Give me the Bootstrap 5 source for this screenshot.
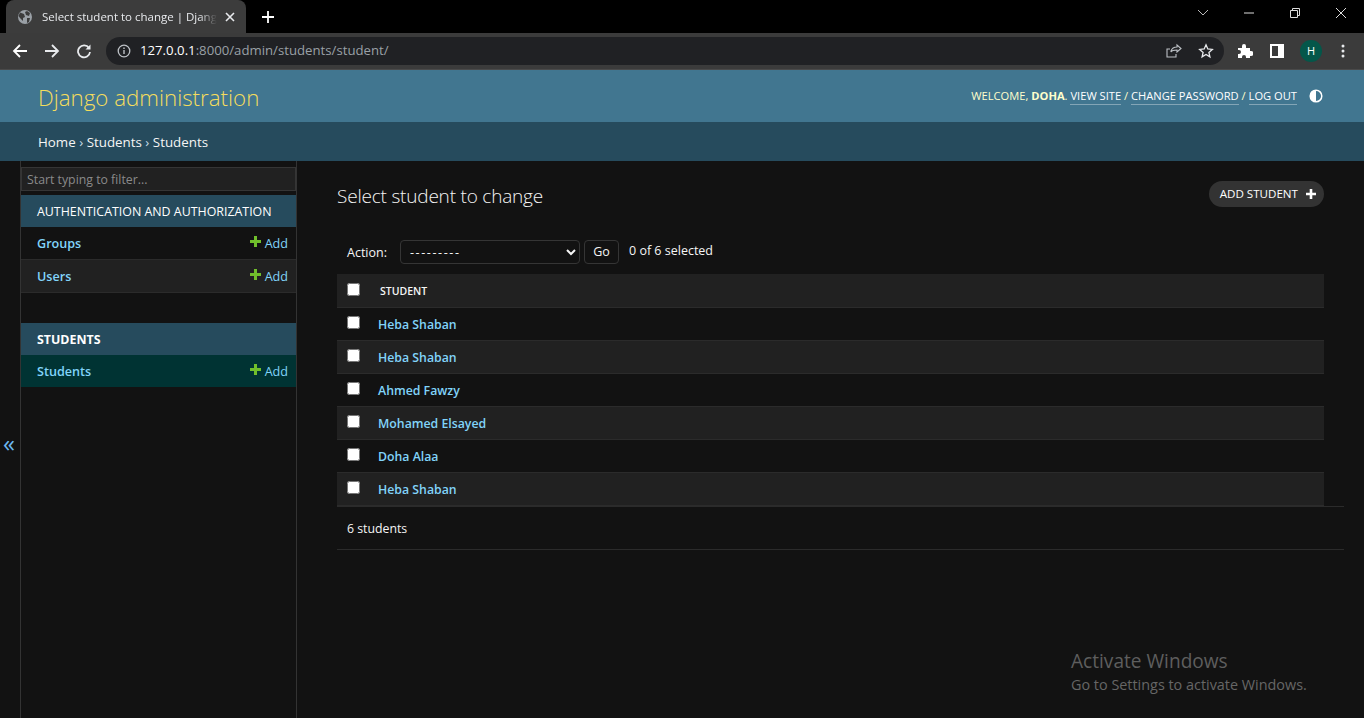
<!DOCTYPE html>
<html lang="en">
<head>
    <meta charset="UTF-8">
    <meta name="viewport" content="width=device-width, initial-scale=1">
    <title>Select student to change | Django site admin</title>
    <link href="https://cdn.jsdelivr.net/npm/bootstrap@5.3.0/dist/css/bootstrap.min.css" rel="stylesheet">
    <style>
        html, body { height: 718px; overflow: hidden; }
        body { background: #121212; color: #f5f5f5; font-family: "Open Sans", "Noto Sans", sans-serif; font-size: 13px; }
        a { text-decoration: none; }

        /* browser chrome */
        .tabbar { height: 33px; background: #000; }
        .tab { width: 240px; height: 33px; margin-left: 6px; padding-left: 11px; background: #3c3c3c; border-radius: 8px 8px 0 0; color: #e8eaed; font-size: 11.5px; white-space: nowrap; }
        .tab-title { width: 175px; overflow: hidden; margin-left: 9px; -webkit-mask-image: linear-gradient(to right, #000 90%, transparent); mask-image: linear-gradient(to right, #000 90%, transparent); }
        .win-btn { width: 46px; height: 26px; }
        .toolbar { height: 37px; background: #3b3b3b; border-bottom: 1px solid #4a4a4a; padding-left: 12px; }
        .nav-ico { margin-right: 16px; }
        .addr { width: 1118px; height: 28px; margin: 0 13px 0 -2px; background: #202124; border-radius: 14px; font-size: 13.2px; color: #9aa0a6; padding-right: 10px; }
        .addr b { color: #fff; font-weight: 400; }
        .addr-info { margin: 0 9px 0 11px; }
        .addr-share { margin-right: 16px; }
        .ext-panel { margin: 0 16px 0 17px; }
        .avatar { width: 22px; height: 22px; background: #04574a; color: #fff; font-size: 11px; margin-right: 19px; }

        /* django header */
        .dj-header { height: 52px; background: #417690; padding: 0 41px 0 38px; }
        .brand { color: #f5dd5d; font-size: 22.3px; font-weight: 300; padding-top: 4px; }
        .user-tools { font-size: 11.15px; color: #ffffcc; text-transform: uppercase; padding-top: 1px; }
        .user-tools a { color: #fff; border-bottom: 1px solid rgba(255,255,255,.35); padding-bottom: 1px; }
        .crumbs { height: 39px; background: #264b5d; padding: 2px 0 0 38px; color: #c4dce8; font-size: 13.35px; }
        .crumbs a, .crumbs span { color: #f5f5f5; }

        /* sidebar */
        .shell { height: 557px; }
        .toggle { width: 21px; border-right: 1px solid #333; color: #6cb8f0; font-size: 24px; padding-top: 270px; padding-left: 3px; line-height: 1; }
        .side { width: 276px; border-right: 1px solid #333; padding-top: 6px; }
        .filter { width: 275px; height: 24px; background: #212121; border: 1px solid #353535; color: #8a8a8a; font-size: 12.3px; padding: 2px 0 0 5px; margin-bottom: 4px; }
        .mod-cap { height: 32px; background: #264b5d; color: #fff; font-size: 12.4px; padding: 2px 0 0 16px; }
        .mod-cap-gap { margin-top: 30px; }
        .mod-row { height: 33px; border-bottom: 1px solid #2b2b2b; padding: 2px 8px 0 16px; font-size: 12.6px; }
        .mod-row.alt { background: #212121; }
        .mod-row.cur { background: #003333; height: 32px; border: 0; }
        .mod-row a { color: #81d4fa; }
        .mod-row .nm { font-weight: 600; }
        .add-link { gap: 4px; }
        .add-link svg { margin-top: -4px; }

        /* main */
        .main { width: 1047px; padding: 0 0 0 40px; }
        .main-h1 { font-size: 19px; letter-spacing: -.2px; font-weight: 300; margin: 4px 0 0; color: #f5f5f5; }
        .title-row { height: 79px; padding: 20px 20px 0 0; }
        .add-btn { height: 26px; background: #333; border-radius: 13px; padding: 0 8px 0 11px; font-size: 11.6px; color: #fff; }
        .actions-row { height: 34px; padding-left: 10px; font-size: 12.5px; width: 987px; }
        .act-select { width: 180px; height: 24px; background: #121212; color: #f5f5f5; border: 1px solid #353535; border-radius: 4px; font-size: 12.5px; letter-spacing: 1.6px; margin-left: 13px; padding: 0 0 0 5px; }
        .go { width: 35px; height: 24px; background: #121212; border: 1px solid #353535; border-radius: 4px; color: #f5f5f5; font-size: 12.5px; margin: 0 10px 0 4px; padding: 0; }
        .sel-count { margin-top: 2px; }
        .stu-table { width: 987px; margin: 0; font-size: 12.3px; }
        .stu-table td, .stu-table th { height: 33px; padding: 4px 0 0; border-bottom: 1px solid #2b2b2b; vertical-align: middle; background: transparent; }
        .stu-table tr.alt td, .stu-table th { background: #212121; }
        .stu-table .chk, .stu-table th.chk { width: 41px; padding: 0 0 0 10px; }
        .stu-table input { display: block; width: 13px; height: 13px; margin-top: -3px; }
        .stu-table th.chk input { margin-top: -2px; }
        .stu-table th.col { font-size: 10.5px; font-weight: 600; color: #f5f5f5; padding-left: 2px; }
        .stu-table a { color: #81d4fa; font-weight: 600; }
        .paginator { height: 44px; padding: 3px 0 0 10px; border-top: 1px solid #2b2b2b; border-bottom: 1px solid #2b2b2b; font-size: 12.3px; }

        /* watermark sits over the page */
        .watermark { position: absolute; left: 1071px; top: 649px; color: #666; font-size: 14.4px; line-height: 1.35; }
        .watermark div:first-child { font-size: 19.1px; color: #5e5e5e; }
    </style>
</head>
<body>

    <!-- Browser tab bar -->
    <div class="tabbar d-flex align-items-end justify-content-between">
        <div class="d-flex align-items-center">
            <div class="tab d-flex align-items-center">
                <svg width="16" height="16" viewBox="0 0 16 16" class="flex-shrink-0"><circle cx="8" cy="8" r="7" fill="#9aa0a6"/><path d="M3 3.500 7 5l1 3-2 1v3L3 9 1.500 7zM10 2l3 2-1 3-3-1-1-3zM10 9l3 0-1 4-2 1z" fill="#3c3c3c"/></svg>
                <div class="tab-title">Select student to change | Django</div>
                <svg width="10" height="10" viewBox="0 0 10 10" class="ms-2 flex-shrink-0"><path d="M1 1l8 8M9 1l-8 8" stroke="#e8eaed" stroke-width="1.600"/></svg>
            </div>
            <svg width="12" height="12" viewBox="0 0 12 12" class="ms-3"><path d="M6 0v12M0 6h12" stroke="#fff" stroke-width="1.800"/></svg>
        </div>
        <div class="d-flex align-self-start">
            <div class="win-btn d-flex align-items-center justify-content-center"><svg width="12" height="8" viewBox="0 0 12 8"><path d="M1 1l5 5 5-5" fill="none" stroke="#bbb"/></svg></div>
            <div class="win-btn d-flex align-items-center justify-content-center"><svg width="12" height="8" viewBox="0 0 12 8"><path d="M1 4h10" stroke="#ddd"/></svg></div>
            <div class="win-btn d-flex align-items-center justify-content-center"><svg width="12" height="12" viewBox="0 0 12 12"><path d="M1.500 3.500h7v7h-7zM3.500 3.500v-2h7v7h-2" fill="none" stroke="#ddd"/></svg></div>
            <div class="win-btn d-flex align-items-center justify-content-center"><svg width="12" height="12" viewBox="0 0 12 12"><path d="M1 1l10 10M11 1 1 11" stroke="#ddd"/></svg></div>
        </div>
    </div>

    <!-- Browser toolbar -->
    <div class="toolbar d-flex align-items-center">
        <svg width="16" height="16" viewBox="0 0 16 16" class="nav-ico"><path d="M15 8H2M8 2 2 8l6 6" fill="none" stroke="#fff" stroke-width="1.800"/></svg>
        <svg width="16" height="16" viewBox="0 0 16 16" class="nav-ico"><path d="M1 8h13M8 2l6 6-6 6" fill="none" stroke="#e8eaed" stroke-width="1.800"/></svg>
        <svg width="16" height="16" viewBox="0 0 16 16" class="nav-ico"><path d="M13 5A6 6 0 1 0 14 9" fill="none" stroke="#e8eaed" stroke-width="1.800"/><path d="M14.500 1.500v5h-5z" fill="#e8eaed"/></svg>
        <div class="addr d-flex align-items-center flex-shrink-0">
            <svg width="14" height="14" viewBox="0 0 14 14" class="addr-info"><circle cx="7" cy="7" r="5.800" fill="none" stroke="#bdc1c6" stroke-width="1.300"/><path d="M7 6v4M7 3.500v1.500" stroke="#bdc1c6" stroke-width="1.400"/></svg>
            <span><b>127.0.0.1</b>:8000/admin/students/student/</span>
            <svg width="16" height="16" viewBox="0 0 16 16" class="ms-auto addr-share"><path d="M5 8c1-3 4-4 6-4V2l4 3.500L11 9V7C9 7 6 7 5 9zM10 11v3H1V6h3" fill="none" stroke="#bdc1c6" stroke-width="1.100"/></svg>
            <svg width="16" height="16" viewBox="0 0 16 16"><path d="M8 1.800 9.800 6l4.500.4-3.400 3 1 4.400L8 11.500l-3.900 2.300 1-4.400-3.400-3L6.200 6z" fill="none" stroke="#e8eaed" stroke-width="1.300"/></svg>
        </div>
        <svg width="16" height="16" viewBox="0 0 16 16"><path d="M1 5h4V3a2 2 0 0 1 4 0v2h4v3h1a2.500 2.500 0 0 1 0 5h-1v2H9v-1a2 2 0 0 0-4 0v1H1v-4h1a2 2 0 0 0 0-4H1z" fill="#fff"/></svg>
        <svg width="14" height="14" viewBox="0 0 14 14" class="ext-panel"><path d="M0 0h14v14H0zM2 2v10h6V2z" fill="#fff" fill-rule="evenodd"/></svg>
        <div class="avatar rounded-circle d-flex align-items-center justify-content-center flex-shrink-0">H</div>
        <svg width="4" height="14" viewBox="0 0 4 14"><circle cx="2" cy="2" r="1.500" fill="#e8eaed"/><circle cx="2" cy="7" r="1.500" fill="#e8eaed"/><circle cx="2" cy="12" r="1.500" fill="#e8eaed"/></svg>
    </div>

    <!-- Django header -->
    <div class="dj-header d-flex align-items-center justify-content-between">
        <div class="brand">Django administration</div>
        <div class="user-tools d-flex align-items-center gap-2">
            <div>Welcome, <strong>Doha</strong>. <a href="#">View site</a> / <a href="#">Change password</a> / <a href="#">Log out</a></div>
            <svg width="14" height="14" viewBox="0 0 14 14" class="ms-1"><circle cx="7" cy="7" r="5.800" fill="none" stroke="#fff" stroke-width="1.500"/><path d="M7 1.200a5.800 5.800 0 0 0 0 11.600z" fill="#fff"/></svg>
        </div>
    </div>
    <div class="crumbs d-flex align-items-center">
        <div><a href="#">Home</a> › <a href="#">Students</a> › <span>Students</span></div>
    </div>

    <div class="shell d-flex">
        <div class="toggle">«</div>

        <!-- Sidebar -->
        <div class="side flex-shrink-0">
            <div class="filter d-flex align-items-center">Start typing to filter...</div>
            <div class="mod-cap d-flex align-items-center">AUTHENTICATION AND AUTHORIZATION</div>
            <div class="mod-row d-flex align-items-center justify-content-between"><a class="nm" href="#">Groups</a><a class="add-link d-flex align-items-center" href="#"><svg width="11" height="11" viewBox="0 0 11 11"><path d="M5.500 0v11M0 5.500h11" stroke="#70bf2b" stroke-width="3"/></svg>Add</a></div>
            <div class="mod-row alt d-flex align-items-center justify-content-between"><a class="nm" href="#">Users</a><a class="add-link d-flex align-items-center" href="#"><svg width="11" height="11" viewBox="0 0 11 11"><path d="M5.500 0v11M0 5.500h11" stroke="#70bf2b" stroke-width="3"/></svg>Add</a></div>
            <div class="mod-cap mod-cap-gap d-flex align-items-center fw-bold">STUDENTS</div>
            <div class="mod-row cur d-flex align-items-center justify-content-between"><a class="nm" href="#">Students</a><a class="add-link d-flex align-items-center" href="#"><svg width="11" height="11" viewBox="0 0 11 11"><path d="M5.500 0v11M0 5.500h11" stroke="#70bf2b" stroke-width="3"/></svg>Add</a></div>
        </div>

        <!-- Main content -->
        <div class="main">
            <div class="title-row d-flex justify-content-between align-items-start">
                <h1 class="main-h1">Select student to change</h1>
                <a class="add-btn d-flex align-items-center gap-2" href="#">ADD STUDENT
                    <svg width="10" height="10" viewBox="0 0 10 10"><path d="M5 0v10M0 5h10" stroke="#fff" stroke-width="2.600"/></svg>
                </a>
            </div>
            <div class="actions-row d-flex align-items-start">
                <label class="mt-1">Action:</label>
                <select class="act-select"><option>---------</option></select>
                <button class="go">Go</button>
                <span class="sel-count">0 of 6 selected</span>
            </div>
            <table class="stu-table table-borderless">
                <tr><th class="chk"><input type="checkbox"></th><th class="col">STUDENT</th></tr>
                <tr><td class="chk"><input type="checkbox"></td><td><a href="#">Heba Shaban</a></td></tr>
                <tr class="alt"><td class="chk"><input type="checkbox"></td><td><a href="#">Heba Shaban</a></td></tr>
                <tr><td class="chk"><input type="checkbox"></td><td><a href="#">Ahmed Fawzy</a></td></tr>
                <tr class="alt"><td class="chk"><input type="checkbox"></td><td><a href="#">Mohamed Elsayed</a></td></tr>
                <tr><td class="chk"><input type="checkbox"></td><td><a href="#">Doha Alaa</a></td></tr>
                <tr class="alt"><td class="chk"><input type="checkbox"></td><td><a href="#">Heba Shaban</a></td></tr>
            </table>
            <div class="paginator d-flex align-items-center">6 students</div>
        </div>
    </div>

    <div class="watermark">
        <div>Activate Windows</div>
        <div>Go to Settings to activate Windows.</div>
    </div>

    <script src="https://cdn.jsdelivr.net/npm/bootstrap@5.3.0/dist/js/bootstrap.bundle.min.js"></script>
</body>
</html>
